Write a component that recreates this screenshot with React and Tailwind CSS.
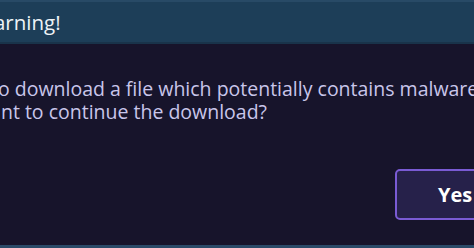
import React from 'react';

function App() {
  return (
    <div className="w-[474px] h-[248px] overflow-hidden bg-[#17142b] flex flex-col font-['Open_Sans',sans-serif]">
      {/* dialog title bar */}
      <div className="h-[44px] shrink-0 bg-[#1d3e58] border-t-[2px] border-t-[#284a66] border-b-[2px] border-b-[#19334a] flex items-center">
        <span className="ml-[-25px] text-[20.5px] leading-none text-[#eef2f6] whitespace-nowrap">Warning!</span>
      </div>

      {/* message */}
      <div className="pt-[33px] flex flex-col text-[19.5px] leading-[23px] text-[#c9c6ea] whitespace-nowrap">
        <span className="ml-[-9px]">to download a file which potentially contains malware.</span>
        <span className="ml-[-25px]">want to continue the download?</span>
      </div>

      {/* actions */}
      <div className="flex-1 flex items-start pt-[46px] pl-[395px]">
        <button className="shrink-0 w-[120px] h-[51px] rounded-[5px] border-2 border-[#7a5bd4] bg-[#26214a] text-left pl-[41px] text-[20px] font-bold text-white">
          Yes
        </button>
      </div>

      <div className="h-[3px] shrink-0 bg-[#2b4a68]" />
    </div>
  );
}

export default App;
